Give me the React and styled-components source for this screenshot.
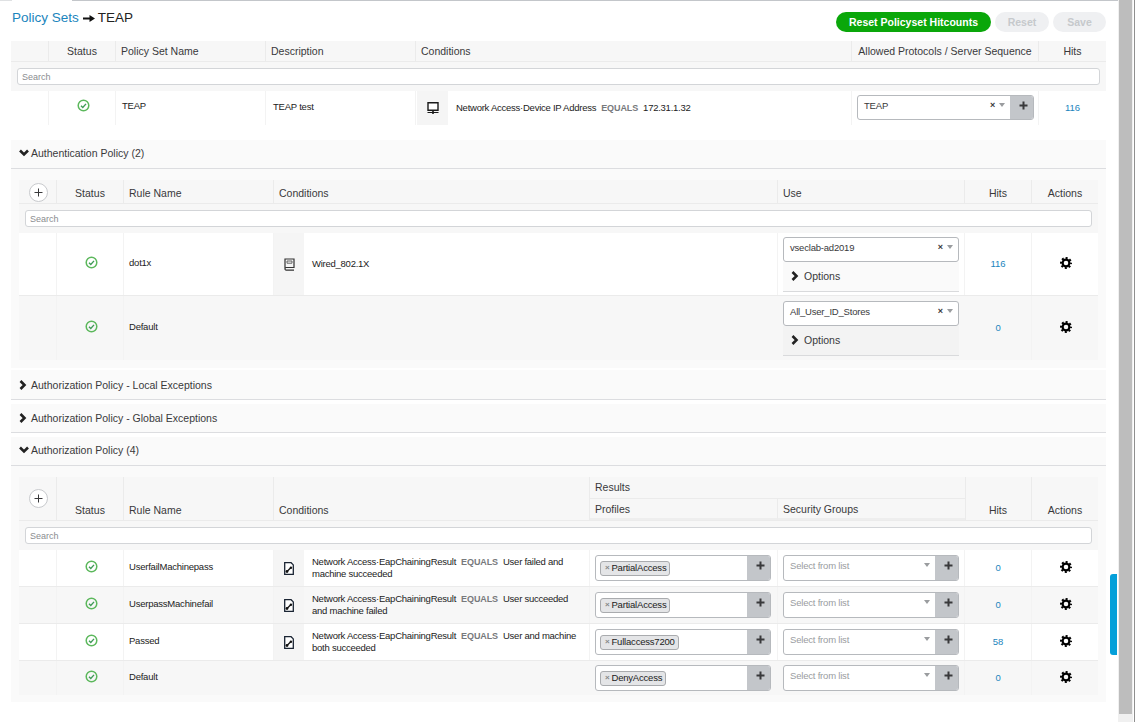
import React from 'react';
import styled, { createGlobalStyle } from 'styled-components';

const Global = createGlobalStyle`
  html, body { margin: 0; padding: 0; background: #fff; }
  body { font-family: "Liberation Sans", Arial, sans-serif; color: #39393b; }
  * { box-sizing: border-box; }
`;

const Page = styled.div`
  position: relative;
  width: 1136px;
  height: 722px;
  overflow: hidden;
  display: flex;
  background: #fff;
`;
const Main = styled.main`
  width: 1118px;
  display: flex;
  flex-direction: column;
`;
const TopRule = styled.div`
  height: 1px;
  flex: none;
  background: linear-gradient(to right, #dfe1e3 0 12px, #fff 12px 72px, #c3c6ca 72px);
`;
const Track = styled.div`
  width: 18px;
  height: 722px;
  flex: none;
  display: flex;
  background: #fff;
`;
const TrackPane = styled.div`
  width: 15px;
  padding: 0 1px;
  background: #f0f0f0;
`;
const TrackBar = styled.div`
  width: 13px;
  height: 714px;
  background: #bdbdbd;
`;
const TrackLine = styled.div`
  width: 1px;
  margin-left: 1px;
  background: #8f8f8f;
`;
const Thumb = styled.div`
  position: absolute;
  left: 1110px;
  top: 574px;
  width: 7px;
  height: 81px;
  background: #049fd9;
  border-radius: 3px 0 0 3px;
`;
const TopBar = styled.header`
  height: 40px;
  padding: 11px 12px 0 12px;
  display: flex;
  align-items: flex-start;
  justify-content: space-between;
  flex: none;
`;
const Crumb = styled.div`
  display: flex;
  align-items: center;
  gap: 3px;
  margin-top: -1px;
  font-size: 13.5px;
  line-height: 14px;
  color: #222;
`;
const CrumbLink = styled.span`
  margin-right: 1px;
  color: #1b85bd;
`;
const Actions = styled.div`
  display: flex;
  gap: 4px;
`;
const Pill = styled.button`
  height: 20px;
  padding: 0;
  width: ${p => p.$w}px;
  border: 0;
  border-radius: 10px;
  background: ${p => (p.$primary ? '#0aa70a' : '#eff0f2')};
  color: ${p => (p.$primary ? '#fff' : '#c6c9cc')};
  font: bold 10.5px "Liberation Sans", Arial, sans-serif;
`;
const Section = styled.section`
  margin: 0 12px 0 11px;
  flex: none;
`;
const Row = styled.div`
  display: grid;
  grid-template-columns: ${p => p.$cols};
  height: ${p => p.$h}px;
  background: ${p => p.$bg || '#fff'};
  border-bottom: ${p => (p.$line ? '1px solid #ebebeb' : '0')};
`;
const HeadCell = styled.div`
  display: flex;
  align-items: center;
  justify-content: ${p => (p.$center ? 'center' : 'flex-start')};
  padding: ${p => p.$pt || 0}px 5px 0;
  font-size: 10.5px;
  color: #39393b;
  border-right: ${p => (p.$last ? '0' : '1px solid #ebebeb')};
`;
const BottomCell = styled(HeadCell)`
  align-items: flex-end;
  padding-bottom: 4px;
`;
const Cell = styled.div`
  display: flex;
  align-items: center;
  justify-content: ${p => (p.$center ? 'center' : 'flex-start')};
  min-width: 0;
  padding: ${p => p.$pad || '0 5px'};
  font-size: 9.5px;
  line-height: 12px;
  letter-spacing: -0.22px;
  color: #222;
  border-right: ${p => (p.$last ? '0' : '1px solid #f3f3f3')};
`;
const SearchRow = styled.div`
  background: #f7f7f7;
  padding: 6px;
  height: 29px;
`;
const SearchBox = styled.input`
  display: block;
  width: 100%;
  height: 17px;
  padding: 0 4px;
  border: 1px solid #d3d5d8;
  border-radius: 3px;
  background: #fff;
  outline: 0;
  font: 9px "Liberation Sans", Arial, sans-serif;
  &::placeholder { color: #8a8c8f; opacity: 1; }
`;
const IconBox = styled.div`
  display: flex;
  align-items: center;
  justify-content: center;
  flex: none;
  width: ${p => p.$w || 30}px;
  margin-left: ${p => p.$ml || 0}px;
  height: 100%;
  background: #f5f5f5;
`;
const CondText = styled.div`
  padding-left: 8px;
  font-size: 9.5px;
  line-height: 12px;
  letter-spacing: -0.25px;
  color: #222;
  white-space: nowrap;
`;
const CondLine = styled.div`
  display: block;
`;
const Equals = styled.span`
  margin: 0 5px;
  font-weight: bold;
  color: #77797c;
  font-size: 9px;
  letter-spacing: -0.1px;
`;
const Hit = styled.span`
  font-size: 9.5px;
  letter-spacing: -0.1px;
  color: #1b85bd;
`;
const SelectBox = styled.div`
  display: flex;
  width: ${p => p.$w}px;
  height: ${p => p.$h || 25}px;
  border: 1px solid #b6b9bd;
  border-radius: 3px;
  background: #fff;
  overflow: hidden;
`;
const SelectValue = styled.div`
  flex: 1;
  min-width: 0;
  display: flex;
  align-items: ${p => (p.$mid ? 'center' : 'flex-start')};
  padding: ${p => (p.$mid ? '0 0 0 4px' : '4px 0 0 6px')};
  font-size: 9.5px;
  line-height: 12px;
  letter-spacing: -0.2px;
  color: ${p => (p.$muted ? '#9a9c9f' : '#39393b')};
  white-space: nowrap;
`;
const Clear = styled.span`
  margin-top: 3px;
  font-size: 9px;
  font-weight: bold;
  color: #39393b;
  line-height: 12px;
`;
const Caret = styled.span`
  flex: none;
  width: 0;
  height: 0;
  margin: 7px 5px 0 4px;
  border-left: 3.5px solid transparent;
  border-right: 3.5px solid transparent;
  border-top: 4px solid #9a9c9f;
`;
const Controls = styled.div`
  align-self: flex-start;
  padding: 4px 0 0 5px;
  flex: none;
`;
const PlusBtn = styled.div`
  flex: none;
  width: 23px;
  background: #c3c6ca;
  display: flex;
  align-items: flex-start;
  justify-content: center;
  padding: 5px 0 0 3px;
`;
const Chip = styled.span`
  display: inline-flex;
  align-items: center;
  height: 15px;
  padding: 0 3px 0 4px;
  gap: 2px;
  border: 1px solid #a9abae;
  border-radius: 3px;
  background: #e4e5e7;
  font-size: 9.5px;
  letter-spacing: -0.2px;
  color: #222;
`;
const ChipX = styled.span`
  font-size: 8px;
  font-weight: bold;
  color: #85878a;
`;
const UseCell = styled.div`
  display: flex;
  flex-direction: column;
  padding: ${p => p.$top}px 0 0 5px;
  border-right: ${p => (p.$plain ? '0' : '1px solid #f3f3f3')};
`;
const Options = styled.div`
  width: 176px;
  height: 30px;
  display: flex;
  align-items: center;
  gap: 5px;
  padding: 0 0 1px 8px;
  font-size: 10.5px;
  color: #39393b;
  background: ${p => p.$bg};
  border-bottom: 1px solid #d9dadc;
`;
const PolicyHead = styled.div`
  height: ${p => p.$h}px;
  margin-top: ${p => p.$mt}px;
  display: flex;
  align-items: center;
  gap: 4px;
  padding: 0 0 ${p => p.$pb || 0}px 8px;
  background: #fafafa;
  border-bottom: 1px solid #dcdde0;
  font-size: 10.5px;
  color: #39393b;
`;
const PolicyBody = styled.div`
  background: #fafafa;
  padding: ${p => p.$pad};
`;
const ResultsHead = styled.div`
  display: grid;
  grid-template-rows: 22px 1fr;
  grid-template-columns: 188px 187px;
  margin-right: -1px;
  border-right: 1px solid #ebebeb;
`;
const ResultsTitle = styled.div`
  grid-column: 1 / span 2;
  display: flex;
  align-items: center;
  padding: 0 5px 2px;
  font-size: 10.5px;
  border-bottom: 1px solid #ebebeb;
`;
const ResultsSub = styled.div`
  display: flex;
  align-items: center;
  padding: 0 5px;
  font-size: 10.5px;
  border-right: ${p => (p.$last ? '0' : '1px solid #ebebeb')};
  border-bottom: 2px solid #eeeeee;
`;
const StatusMark = styled.svg`
  margin: 0 0 ${p => p.$mb || 4}px 2px;
`;
const Status = ({ mb }) => (
  <StatusMark $mb={mb} width="13" height="13" viewBox="0 0 13 13" fill="none" aria-hidden="true">
    <circle cx="6.5" cy="6.5" r="5.3" stroke="#5cb85c" strokeWidth="1.5" />
    <path d="M4 6.7l1.800 1.800L9 4.900" stroke="#3f9a57" strokeWidth="1.4" />
  </StatusMark>
);
const GearMark = styled.svg`
  margin: 0 0 3px 2px;
`;
const Gear = () => (
  <GearMark width="12" height="12" viewBox="0 0 12 12" aria-hidden="true">
    <circle cx="6" cy="6" r="3.4" fill="none" stroke="#000" strokeWidth="2.2" />
    <circle cx="6" cy="6" r="5" fill="none" stroke="#000" strokeWidth="2" strokeDasharray="2 1.93" strokeDashoffset="1" />
  </GearMark>
);
const Plus = () => (
  <svg width="9" height="9" viewBox="0 0 9 9" aria-hidden="true">
    <path d="M4.500 .5v8M.5 4.500h8" stroke="#39393b" strokeWidth="2" />
  </svg>
);
const ChevSvg = styled.svg`
  margin-right: -2px;
`;
const ChevDown = () => (
  <ChevSvg width="10" height="8" viewBox="0 0 10 8" fill="none" aria-hidden="true">
    <path d="M1 1.500l4 4 4-4" stroke="#222" strokeWidth="2.600" />
  </ChevSvg>
);
const ChevRight = () => (
  <svg width="8" height="10" viewBox="0 0 8 10" fill="none" aria-hidden="true">
    <path d="M1.500 1l4 4-4 4" stroke="#222" strokeWidth="2.600" />
  </svg>
);
const Arrow = () => (
  <svg width="12" height="9" viewBox="0 0 12 9" aria-hidden="true">
    <path d="M0 3.500h6.500V1L12 4.500 6.500 8V5.500H0z" fill="#111" />
  </svg>
);
const Monitor = () => (
  <svg width="12" height="12" viewBox="0 0 12 12" aria-hidden="true">
    <path d="M1 .8h10v7.400H1z" fill="#fff" stroke="#1a1a1a" strokeWidth="1.400" />
    <path d="M5.200 8.500h1.600v1.500H5.200zM.5 10h11v1H.5z" fill="#1a1a1a" />
    <path d="M5.200 11h1.600v1H5.200z" fill="#1a1a1a" />
  </svg>
);
const Book = () => (
  <svg width="11" height="13" viewBox="0 0 11 13" fill="none" aria-hidden="true">
    <path d="M1 11.500V1h9v8.500H2.200A1.200 1.200 0 0 0 1 10.700a1.300 1.300 0 0 0 1.200 1.500H10" stroke="#333" strokeWidth="1.200" />
    <path d="M3 3h5v2.200H3z" stroke="#555" strokeWidth=".9" />
  </svg>
);
const DocIcon = () => (
  <svg width="10" height="13" viewBox="0 0 10 13" aria-hidden="true">
    <path d="M.7.700h6.400l2.200 2.200v9.400H.7z" fill="#fff" stroke="#1a2433" strokeWidth="1.300" />
    <path d="M3 9.500l4-4" stroke="#111" strokeWidth="1.200" />
    <circle cx="3" cy="9.500" r="1.400" fill="#111" />
    <circle cx="6.900" cy="5.700" r="1.200" fill="#111" />
  </svg>
);
const Add = styled.div`
  width: 19px;
  height: 19px;
  border: 1px solid #c8cacd;
  border-radius: 50%;
  background: #fff;
  display: flex;
  align-items: center;
  justify-content: center;
`;
const AddHolder = styled.div`
  display: flex;
  justify-content: center;
  padding: ${p => p.$pt}px 0 0 2px;
  border-right: 1px solid #ebebeb;
`;
const AddIcon = () => (
  <Add>
    <svg width="9" height="9" viewBox="0 0 9 9" aria-hidden="true">
      <path d="M4.500 .5v8M.5 4.500h8" stroke="#39393b" strokeWidth="1" />
    </svg>
  </Add>
);

const setCols = '38px 67px 150px 150px 436px 187px 67px';
const ruleCols = '38px 67px 150px 504px 187px 67px 66px';
const authzCols = '38px 67px 150px 316px 188px 187px 67px 66px';
const authzHeadCols = '38px 67px 150px 316px 375px 67px 66px';

const UseSelect = ({ value }) => (
  <SelectBox $w={176}>
    <SelectValue>{value}</SelectValue>
    <Clear>×</Clear>
    <Caret />
  </SelectBox>
);

const authn = [
  { name: 'dot1x', cond: 'Wired_802.1X', use: 'vseclab-ad2019', hits: '116', bg: '#fff', opt: '#fafafa', h: 63, top: 4 },
  { name: 'Default', use: 'All_User_ID_Stores', hits: '0', bg: '#f7f7f7', opt: '#f3f3f3', h: 64, top: 5 },
];

const authz = [
  { name: 'UserfailMachinepass', cond: ['User failed and', 'machine succeeded'], chip: 'PartialAccess', hits: '0', bg: '#fff', h: 37 },
  { name: 'UserpassMachinefail', cond: ['User succeeded', 'and machine failed'], chip: 'PartialAccess', hits: '0', bg: '#f7f7f7', h: 37 },
  { name: 'Passed', cond: ['User and machine', 'both succeeded'], chip: 'Fullaccess7200', hits: '58', bg: '#fff', h: 37 },
  { name: 'Default', chip: 'DenyAccess', hits: '0', bg: '#f7f7f7', h: 34 },
];

const AuthzRow = ({ r }) => (
  <Row $cols={authzCols} $h={r.h} $bg={r.bg} $line={r.h === 37}>
    <Cell />
    <Cell $center><Status /></Cell>
    <Cell $pad="0 5px 2px" $last={!r.cond}>{r.name}</Cell>
    <Cell $pad="0" $last={!r.cond}>
      {r.cond && <IconBox><DocIcon /></IconBox>}
      {r.cond && (
        <CondText>
          <CondLine>Network Access·EapChainingResult<Equals>EQUALS</Equals>{r.cond[0]}</CondLine>
          <CondLine>{r.cond[1]}</CondLine>
        </CondText>
      )}
    </Cell>
    <Cell $pad="0 0 0 5px" $last={!r.cond}>
      <SelectBox $w={176} $h={26}>
        <SelectValue $mid><Chip><ChipX>×</ChipX>{r.chip}</Chip></SelectValue>
        <PlusBtn><Plus /></PlusBtn>
      </SelectBox>
    </Cell>
    <Cell $pad="0 0 0 5px">
      <SelectBox $w={176} $h={26}>
        <SelectValue $muted>Select from list</SelectValue>
        <Caret />
        <PlusBtn><Plus /></PlusBtn>
      </SelectBox>
    </Cell>
    <Cell $center><Hit>{r.hits}</Hit></Cell>
    <Cell $center $last><Gear /></Cell>
  </Row>
);

export default function App() {
  return (
    <Page>
      <Global />
      <Main>
        <TopRule />
        <TopBar>
          <Crumb><CrumbLink>Policy Sets</CrumbLink><Arrow />TEAP</Crumb>
          <Actions>
            <Pill $primary $w={155}>Reset Policyset Hitcounts</Pill>
            <Pill $w={54}>Reset</Pill>
            <Pill $w={53}>Save</Pill>
          </Actions>
        </TopBar>

        <Section>
          <Row $cols={setCols} $h={21} $bg="#f7f7f7" $line>
            <HeadCell />
            <HeadCell $center>Status</HeadCell>
            <HeadCell>Policy Set Name</HeadCell>
            <HeadCell>Description</HeadCell>
            <HeadCell>Conditions</HeadCell>
            <HeadCell $center>Allowed Protocols / Server Sequence</HeadCell>
            <HeadCell $center $last>Hits</HeadCell>
          </Row>
          <SearchRow><SearchBox placeholder="Search" readOnly /></SearchRow>
          <Row $cols={setCols} $h={34}>
            <Cell />
            <Cell $center><Status mb={6} /></Cell>
            <Cell $pad="0 6px 4px">TEAP</Cell>
            <Cell $pad="0 7px 2px">TEAP test</Cell>
            <Cell $pad="0">
              <IconBox $w={31} $ml={1}><Monitor /></IconBox>
              <CondText>Network Access·Device IP Address<Equals>EQUALS</Equals>172.31.1.32</CondText>
            </Cell>
            <Cell $pad="0">
              <Controls>
                <SelectBox $w={177}>
                  <SelectValue>TEAP</SelectValue>
                  <Clear>×</Clear>
                  <Caret />
                  <PlusBtn><Plus /></PlusBtn>
                </SelectBox>
              </Controls>
            </Cell>
            <Cell $center $last><Hit>116</Hit></Cell>
          </Row>

          <PolicyHead $h={29} $mt={15} $pb={2}><ChevDown />Authentication Policy (2)</PolicyHead>
          <PolicyBody $pad="11px 8px 8px">
            <Row $cols={ruleCols} $h={24} $bg="#f7f7f7" $line>
              <AddHolder $pt={3}><AddIcon /></AddHolder>
              <HeadCell $center $pt={2}>Status</HeadCell>
              <HeadCell $pt={2}>Rule Name</HeadCell>
              <HeadCell $pt={2}>Conditions</HeadCell>
              <HeadCell $pt={2}>Use</HeadCell>
              <HeadCell $center $pt={2}>Hits</HeadCell>
              <HeadCell $center $last $pt={2}>Actions</HeadCell>
            </Row>
            <SearchRow><SearchBox placeholder="Search" readOnly /></SearchRow>
            {authn.map(r => (
              <Row key={r.name} $cols={ruleCols} $h={r.h} $bg={r.bg} $line={r.name === 'dot1x'}>
                <Cell />
                <Cell $center><Status /></Cell>
                <Cell $pad="0 5px 2px" $last={!r.cond}>{r.name}</Cell>
                <Cell $pad="0" $last={!r.cond}>
                  {r.cond && <IconBox><Book /></IconBox>}
                  {r.cond && <CondText>{r.cond}</CondText>}
                </Cell>
                <UseCell $plain={!r.cond} $top={r.top}>
                  <UseSelect value={r.use} />
                  <Options $bg={r.opt}><ChevRight />Options</Options>
                </UseCell>
                <Cell $center><Hit>{r.hits}</Hit></Cell>
                <Cell $center $last><Gear /></Cell>
              </Row>
            ))}
          </PolicyBody>

          <PolicyHead $h={30} $mt={2}><ChevRight />Authorization Policy - Local Exceptions</PolicyHead>
          <PolicyHead $h={29} $mt={4}><ChevRight />Authorization Policy - Global Exceptions</PolicyHead>
          <PolicyHead $h={29} $mt={4} $pb={2}><ChevDown />Authorization Policy (4)</PolicyHead>
          <PolicyBody $pad="11px 8px 7px">
            <Row $cols={authzHeadCols} $h={44} $bg="#f7f7f7" $line>
              <AddHolder $pt={12}><AddIcon /></AddHolder>
              <BottomCell $center>Status</BottomCell>
              <BottomCell>Rule Name</BottomCell>
              <BottomCell>Conditions</BottomCell>
              <ResultsHead>
                <ResultsTitle>Results</ResultsTitle>
                <ResultsSub>Profiles</ResultsSub>
                <ResultsSub $last>Security Groups</ResultsSub>
              </ResultsHead>
              <BottomCell $center>Hits</BottomCell>
              <BottomCell $center $last>Actions</BottomCell>
            </Row>
            <SearchRow><SearchBox placeholder="Search" readOnly /></SearchRow>
            {authz.map(r => <AuthzRow key={r.name} r={r} />)}
          </PolicyBody>
        </Section>
      </Main>
      <Track>
        <TrackPane><TrackBar /></TrackPane>
        <TrackLine />
      </Track>
      <Thumb />
    </Page>
  );
}
